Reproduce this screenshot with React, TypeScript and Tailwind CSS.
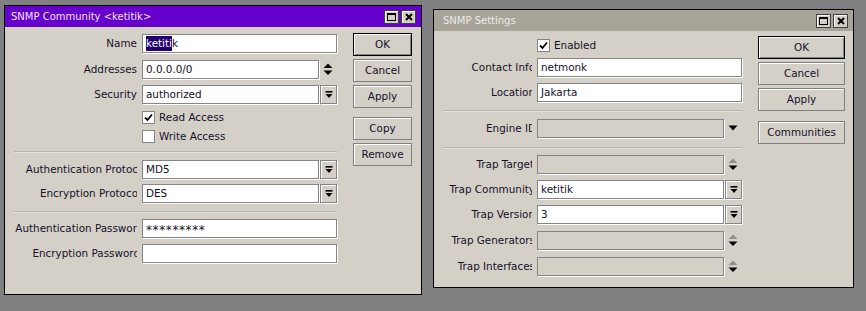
import React from 'react';

const font = { fontFamily: '"DejaVu Sans", Verdana, sans-serif' };

const cutClass: Record<number, string> = {
  0: '',
  1: 'mr-[-1px]',
  2: 'mr-[-2px]',
  3: 'mr-[-3px]',
  4: 'mr-[-4px]',
};

function DropIcon() {
  return (
    <svg width="8" height="8" viewBox="0 0 8 8">
      <rect x="0.5" y="0" width="7" height="1.6" fill="#000" />
      <polygon points="0.5,3 7.5,3 4,7" fill="#000" />
    </svg>
  );
}

function UpDown({ disabled = false }: { disabled?: boolean }) {
  return (
    <svg width="10" height="13" viewBox="0 0 10 13">
      <polygon points="5,0.5 0.5,5 9.5,5" fill={disabled ? '#8f9188' : '#000'} />
      <polygon points="0.5,7.5 9.5,7.5 5,12" fill="#000" />
    </svg>
  );
}

function DownOnly() {
  return (
    <svg width="10" height="13" viewBox="0 0 10 13">
      <polygon points="0.5,3.5 9.5,3.5 5,8.5" fill="#000" />
    </svg>
  );
}

function Label({ text, w, cut = 0 }: { text: string; w: string; cut?: number }) {
  return (
    <div
      className={`${w} flex shrink-0 justify-end whitespace-nowrap text-[10.4px] text-[#14102a] [clip-path:inset(0_0_0_-60px)]`}
    >
      <span className={cutClass[cut]}>{text}</span>
    </div>
  );
}

function Input({
  value,
  w,
  disabled = false,
}: {
  value?: React.ReactNode;
  w: string;
  disabled?: boolean;
}) {
  return (
    <div
      className={`${w} h-[19px] shrink-0 border border-[#858585] shadow-[1px_1px_0_#ffffff] flex items-center px-[3px] text-[10.4px] text-[#14102a] whitespace-nowrap overflow-hidden ${
        disabled ? 'bg-[#d4d0c8]' : 'bg-white'
      }`}
    >
      {value}
    </div>
  );
}

function DropBtn() {
  return (
    <div className="w-[17px] h-[19px] shrink-0 border border-[#858585] bg-[#d4d0c8] shadow-[inset_1px_1px_0_#ffffff,1px_1px_0_#ffffff] flex items-center justify-center">
      <DropIcon />
    </div>
  );
}

function Check({ checked }: { checked: boolean }) {
  return (
    <div className="w-[13px] h-[13px] border border-[#858585] bg-white flex items-center justify-center">
      {checked && (
        <svg width="9" height="9" viewBox="0 0 9 9">
          <path d="M1 4.5 L3.5 7 L8 1.5" fill="none" stroke="#000" strokeWidth="1.8" />
        </svg>
      )}
    </div>
  );
}

function Btn({ text, w, def = false }: { text: string; w: string; def?: boolean }) {
  return (
    <div
      className={`${w} h-[23px] flex items-center justify-center bg-[#d4d0c8] text-[10.4px] text-[#14102a] ${
        def
          ? 'border border-black shadow-[inset_1px_1px_0_#ffffff,inset_-1px_-1px_0_#808080]'
          : 'border border-[#808080] shadow-[inset_1px_1px_0_#ffffff]'
      }`}
    >
      {text}
    </div>
  );
}

function TitleButtons() {
  return (
    <div className="flex gap-[2px]">
      <div className="w-[15px] h-[14px] bg-[#d4d0c8] border border-[#404040] shadow-[inset_1px_1px_0_#ffffff] flex items-center justify-center">
        <svg width="9" height="8" viewBox="0 0 9 8">
          <rect x="0.5" y="0.5" width="8" height="7" fill="none" stroke="#000" />
          <rect x="0" y="0" width="9" height="2" fill="#000" />
        </svg>
      </div>
      <div className="w-[15px] h-[14px] bg-[#d4d0c8] border border-[#404040] shadow-[inset_1px_1px_0_#ffffff] flex items-center justify-center">
        <svg width="8" height="8" viewBox="0 0 8 8">
          <path d="M1 1 L7 7 M7 1 L1 7" stroke="#000" strokeWidth="2" />
        </svg>
      </div>
    </div>
  );
}

function Separator({ w }: { w: string }) {
  return <div className={`${w} h-[2px] border-t border-[#b9b5ac] border-b border-b-[#e4e1da]`} />;
}

function CommunityWindow() {
  return (
    <div className="absolute left-[4px] top-[5px] w-[418px] h-[290px] border border-black bg-[#d4d0c8] flex flex-col">
      <div className="h-[21px] bg-[#6600cc] flex items-center justify-between pl-[6px] pr-[5px]">
        <span className="text-[10px] text-[#ece4fa]">SNMP Community &lt;ketitik&gt;</span>
        <TitleButtons />
      </div>
      <div className="flex pl-[9px]">
        <div className="flex flex-col w-[323px]">
          <div className="flex items-center gap-[5px] mt-[7px]">
            <Label text="Name" w="w-[123px]" />
            <Input
              w="w-[195px]"
              value={
                <>
                  <span className="bg-[#22006e] text-white">ketiti</span>
                  <span>k</span>
                </>
              }
            />
          </div>
          <div className="flex items-center gap-[5px] mt-[7px]">
            <Label text="Addresses" w="w-[123px]" />
            <Input w="w-[177px]" value="0.0.0.0/0" />
            <div className="ml-[-1px]">
              <UpDown />
            </div>
          </div>
          <div className="flex items-center gap-[5px] mt-[6px]">
            <Label text="Security" w="w-[123px]" />
            <div className="flex gap-px">
              <Input w="w-[177px]" value="authorized" />
              <DropBtn />
            </div>
          </div>
          <div className="flex items-center gap-[4px] h-[19px] mt-[4px] pl-[128px] text-[10.4px] text-[#14102a]">
            <Check checked />
            <span>Read Access</span>
          </div>
          <div className="flex items-center gap-[4px] h-[19px] pl-[128px] text-[10.4px] text-[#14102a]">
            <Check checked={false} />
            <span>Write Access</span>
          </div>
          <div className="mt-[5px]">
            <Separator w="w-[323px]" />
          </div>
          <div className="flex items-center gap-[5px] mt-[7px]">
            <Label text="Authentication Protoc" w="w-[123px]" cut={1} />
            <div className="flex gap-px">
              <Input w="w-[177px]" value="MD5" />
              <DropBtn />
            </div>
          </div>
          <div className="flex items-center gap-[5px] mt-[5px]">
            <Label text="Encryption Protoco" w="w-[123px]" cut={1} />
            <div className="flex gap-px">
              <Input w="w-[177px]" value="DES" />
              <DropBtn />
            </div>
          </div>
          <div className="mt-[8px]">
            <Separator w="w-[323px]" />
          </div>
          <div className="flex items-center gap-[5px] mt-[6px]">
            <Label text="Authentication Passwor" w="w-[123px]" />
            <Input
              w="w-[195px]"
              value={<span className="text-[12px] tracking-[0.6px] pt-[3px]">*********</span>}
            />
          </div>
          <div className="flex items-center gap-[5px] mt-[6px]">
            <Label text="Encryption Password" w="w-[123px]" cut={3} />
            <Input w="w-[195px]" />
          </div>
        </div>
        <div className="flex flex-col ml-[16px] mt-[6px] gap-[3px]">
          <Btn text="OK" w="w-[59px]" def />
          <Btn text="Cancel" w="w-[59px]" />
          <Btn text="Apply" w="w-[59px]" />
          <div className="h-[3px]" />
          <Btn text="Copy" w="w-[59px]" />
          <Btn text="Remove" w="w-[59px]" />
        </div>
      </div>
    </div>
  );
}

function SettingsWindow() {
  return (
    <div className="absolute left-[433px] top-[9px] w-[421px] h-[279px] border border-black bg-[#d4d0c8] flex flex-col">
      <div className="h-[21px] bg-[#a8a49a] flex items-center justify-between pl-[9px] pr-[5px]">
        <span className="text-[10px] text-[#ecebe8]">SNMP Settings</span>
        <TitleButtons />
      </div>
      <div className="flex pl-[9px]">
        <div className="flex flex-col w-[300px]">
          <div className="flex items-center gap-[4px] h-[19px] mt-[5px] pl-[94px] text-[10.4px] text-[#14102a]">
            <Check checked />
            <span>Enabled</span>
          </div>
          <div className="flex items-center gap-[5px] mt-[3px]">
            <Label text="Contact Info" w="w-[89px]" cut={3} />
            <Input w="w-[205px]" value="netmonk" />
          </div>
          <div className="flex items-center gap-[5px] mt-[6px]">
            <Label text="Location" w="w-[89px]" cut={3} />
            <Input w="w-[205px]" value="Jakarta" />
          </div>
          <div className="mt-[8px]">
            <Separator w="w-[299px]" />
          </div>
          <div className="flex items-center gap-[5px] mt-[7px]">
            <Label text="Engine ID" w="w-[89px]" cut={4} />
            <Input w="w-[187px]" disabled />
            <div className="ml-[-1px]">
              <DownOnly />
            </div>
          </div>
          <div className="mt-[9px]">
            <Separator w="w-[299px]" />
          </div>
          <div className="flex items-center gap-[5px] mt-[6px]">
            <Label text="Trap Target" w="w-[89px]" cut={2} />
            <Input w="w-[187px]" disabled />
            <div className="ml-[-1px]">
              <UpDown disabled />
            </div>
          </div>
          <div className="flex items-center gap-[5px] mt-[6px]">
            <Label text="Trap Community" w="w-[89px]" cut={3} />
            <div className="flex gap-px">
              <Input w="w-[187px]" value="ketitik" />
              <DropBtn />
            </div>
          </div>
          <div className="flex items-center gap-[5px] mt-[6px]">
            <Label text="Trap Version" w="w-[89px]" cut={3} />
            <div className="flex gap-px">
              <Input w="w-[187px]" value="3" />
              <DropBtn />
            </div>
          </div>
          <div className="flex items-center gap-[5px] mt-[7px]">
            <Label text="Trap Generators" w="w-[89px]" cut={3} />
            <Input w="w-[187px]" disabled />
            <div className="ml-[-1px]">
              <UpDown disabled />
            </div>
          </div>
          <div className="flex items-center gap-[5px] mt-[7px]">
            <Label text="Trap Interfaces" w="w-[89px]" cut={3} />
            <Input w="w-[187px]" disabled />
            <div className="ml-[-1px]">
              <UpDown disabled />
            </div>
          </div>
        </div>
        <div className="flex flex-col ml-[15px] mt-[5px] gap-[3px]">
          <Btn text="OK" w="w-[87px]" def />
          <Btn text="Cancel" w="w-[87px]" />
          <Btn text="Apply" w="w-[87px]" />
          <div className="h-[4px]" />
          <Btn text="Communities" w="w-[87px]" />
        </div>
      </div>
    </div>
  );
}

export default function App() {
  return (
    <div className="relative w-[866px] h-[311px] bg-[#808080] overflow-hidden" style={font}>
      <CommunityWindow />
      <SettingsWindow />
    </div>
  );
}
